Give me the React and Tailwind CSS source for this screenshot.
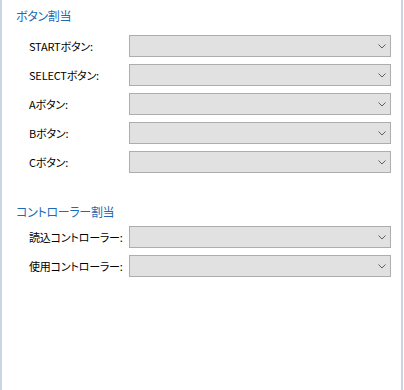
import React from 'react';

const font = {
  fontFamily: '"Noto Sans CJK JP", "Noto Sans", sans-serif',
};

const Chevron = () => (
  <svg width="8" height="5" viewBox="0 0 8 5" className="mr-[4px]">
    <polyline points="0.5,0.5 4,4 7.5,0.5" fill="none" stroke="#606060" strokeWidth="1" />
  </svg>
);

const Row = ({ label }) => (
  <div className="flex items-center h-[22px]">
    <div className="w-[127px] shrink-0 pl-[27px] text-[11px] tracking-[-0.2px] text-black leading-none whitespace-nowrap [font-feature-settings:'palt']">
      {label}
    </div>
    <div className="w-[262px] shrink-0 h-[22px] bg-[#e1e1e1] border border-[#adadad] flex items-center justify-end">
      <Chevron />
    </div>
  </div>
);

const Section = ({ title, rows, className }) => (
  <div className={className}>
    <div className="pl-[14px] text-[12px] tracking-[-0.3px] leading-[16px] text-[#1e6ab4] [font-feature-settings:'palt']">{title}</div>
    {rows}
  </div>
);

export default function App() {
  return (
    <div className="w-[404px] h-[390px] bg-white flex" style={font}>
      <div className="w-[2px] bg-[#c9d5e1]" />
      <div className="flex-1 flex flex-col">
        <Section
          className="pt-[8px]"
          title="ボタン割当"
          rows={
            <div className="mt-[11px] flex flex-col gap-[7px]">
              <Row label="STARTボタン:" />
              <Row label="SELECTボタン:" />
              <Row label="Aボタン:" />
              <Row label="Bボタン:" />
              <Row label="Cボタン:" />
            </div>
          }
        />
        <Section
          className="mt-[31px]"
          title="コントローラー割当"
          rows={
            <div className="mt-[6px] flex flex-col gap-[7px]">
              <Row label="読込コントローラー:" />
              <Row label="使用コントローラー:" />
            </div>
          }
        />
      </div>
      <div className="w-[2px] bg-[#c9d5e1] mr-[1px]" />
    </div>
  );
}
